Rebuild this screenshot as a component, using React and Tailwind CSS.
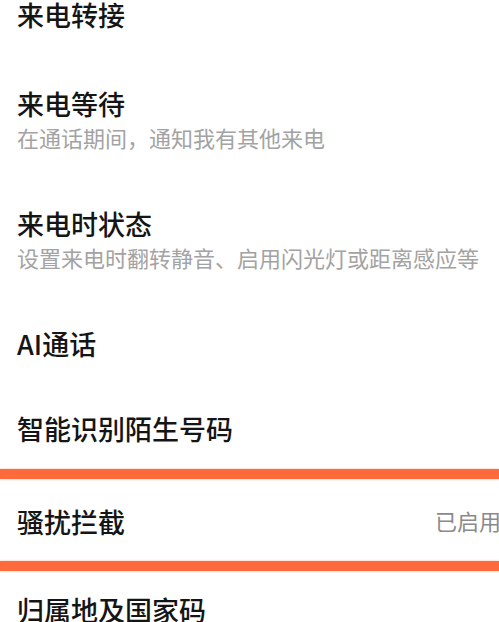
import React from "react";

const font = { fontFamily: '"Noto Sans CJK SC", "Noto Sans", sans-serif' };

function Row({ title, sub, h }) {
  return (
    <div className={`flex flex-col justify-center px-[17px] ${h}`}>
      <div className="text-[27px] leading-[36px] font-medium text-[#151515] whitespace-nowrap">{title}</div>
      {sub && (
        <div className="text-[22px] leading-[30px] text-[#a3a3a3] whitespace-nowrap">{sub}</div>
      )}
    </div>
  );
}

export default function App() {
  return (
    <div className="w-[499px] h-[622px] overflow-hidden bg-white" style={font}>
      <div className="-mt-[30px] flex flex-col">
        <Row title="来电转接" h="h-[89px]" />
        <Row title="来电等待" sub="在通话期间，通知我有其他来电" h="h-[120px]" />
        <Row title="来电时状态" sub="设置来电时翻转静音、启用闪光灯或距离感应等" h="h-[120px]" />
        <Row title="AI通话" h="h-[89px]" />
        <Row title="智能识别陌生号码" h="h-[81px]" />
        <div className="h-[10px] bg-[#ff6a3d] shadow-[0_0_2px_#ffb090]" />
        <div className="h-[82px] pt-[4px] px-[17px] flex items-center justify-between">
          <div className="text-[27px] leading-[36px] font-medium text-[#151515] whitespace-nowrap">骚扰拦截</div>
          <div className="text-[22px] leading-[30px] text-[#8a8a8a] -mr-[19px] -mt-[4px] whitespace-nowrap">已启用</div>
        </div>
        <div className="h-[10px] bg-[#ff6a3d] shadow-[0_0_2px_#ffb090]" />
        <Row title="归属地及国家码" h="h-[77px]" />
      </div>
    </div>
  );
}
